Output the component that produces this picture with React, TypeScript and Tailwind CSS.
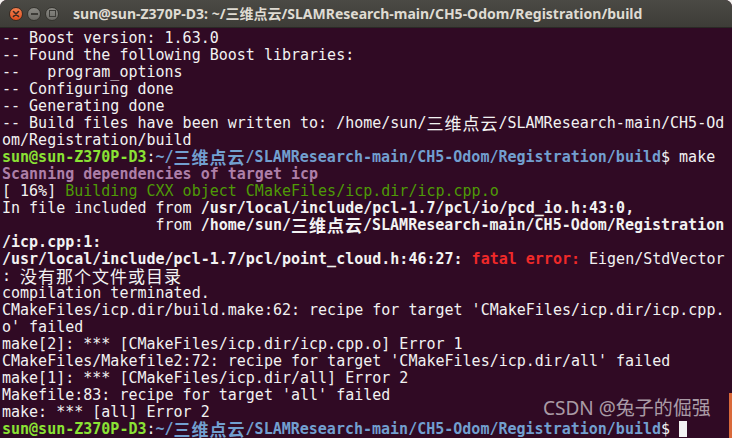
import React from "react";

const MONO = "font-['DejaVu_Sans_Mono','Liberation_Mono','Noto_Sans_CJK_SC',monospace]";

// CJK glyphs take two terminal columns (18px)
const Cjk = ({ children }: { children: string }) => (
  <span className="relative -top-[1px] inline-block h-[17px] align-top leading-[17px] font-['Noto_Sans_CJK_SC',sans-serif] text-[17px] tracking-[1px]">
    {children}
  </span>
);

const Prompt = ({ cmd }: { cmd?: string }) => (
  <>
    <span className="font-bold text-[#8ae234]">sun@sun-Z370P-D3</span>
    <span>:</span>
    <span className="font-bold text-[#729fcf]">
      ~/<Cjk>三维点云</Cjk>/SLAMResearch-main/CH5-Odom/Registration/build
    </span>
    <span>$ {cmd}</span>
  </>
);

const B = ({ children }: { children: React.ReactNode }) => <span className="font-bold">{children}</span>;

export default function App() {
  const lines: React.ReactNode[] = [
    "-- Boost version: 1.63.0",
    "-- Found the following Boost libraries:",
    "--   program_options",
    "-- Configuring done",
    "-- Generating done",
    <>-- Build files have been written to: /home/sun/<Cjk>三维点云</Cjk>/SLAMResearch-main/CH5-Od</>,
    "om/Registration/build",
    <Prompt cmd="make" />,
    <span className="font-bold text-[#ad7fa8]">Scanning dependencies of target icp</span>,
    <>[ 16%] <span className="text-[#4e9a06]">Building CXX object CMakeFiles/icp.dir/icp.cpp.o</span></>,
    <>In file included from <B>/usr/local/include/pcl-1.7/pcl/io/pcd_io.h:43:0,</B></>,
    <>{"                 from "}<B>/home/sun/<Cjk>三维点云</Cjk>/SLAMResearch-main/CH5-Odom/Registration</B></>,
    <B>/icp.cpp:1:</B>,
    <>
      <B>/usr/local/include/pcl-1.7/pcl/point_cloud.h:46:27:</B>{" "}
      <span className="font-bold text-[#ef2929]">fatal error:</span> Eigen/StdVector
    </>,
    <>: <Cjk>没有那个文件或目录</Cjk></>,
    "compilation terminated.",
    "CMakeFiles/icp.dir/build.make:62: recipe for target 'CMakeFiles/icp.dir/icp.cpp.",
    "o' failed",
    "make[2]: *** [CMakeFiles/icp.dir/icp.cpp.o] Error 1",
    "CMakeFiles/Makefile2:72: recipe for target 'CMakeFiles/icp.dir/all' failed",
    "make[1]: *** [CMakeFiles/icp.dir/all] Error 2",
    "Makefile:83: recipe for target 'all' failed",
    "make: *** [all] Error 2",
    <>
      <Prompt />
      <span className="inline-block w-[8px] h-[16px] align-[-3px] bg-[#f2f2f2]" />
    </>,
  ];

  return (
    <div className="w-[732px] h-[438px] bg-[#f4f2ef] overflow-hidden">
      <div className="h-full rounded-t-[7px] overflow-hidden flex flex-col bg-[#300a24]">
        {/* Title bar */}
        <div className="h-[28px] shrink-0 flex items-center bg-gradient-to-b from-[#4b4a45] to-[#3d3c37] border-b border-[#2a2925]">
          <div className="flex items-center gap-[4px] pl-[9px]">
            <div className="w-[14px] h-[14px] rounded-full bg-gradient-to-b from-[#f3804f] to-[#df4d1a] border border-[#3a2a22] flex items-center justify-center">
              <svg width="8" height="8" viewBox="0 0 8 8">
                <path d="M1.5 1.5 L6.5 6.5 M6.5 1.5 L1.5 6.5" stroke="#3c2a22" strokeWidth="1.6" strokeLinecap="round" />
              </svg>
            </div>
            <div className="w-[14px] h-[14px] rounded-full bg-gradient-to-b from-[#8a8984] to-[#6c6b66] border border-[#35342f] flex items-center justify-center">
              <div className="w-[7px] h-[2px] bg-[#3c3b37]" />
            </div>
            <div className="w-[14px] h-[14px] rounded-full bg-gradient-to-b from-[#8a8984] to-[#6c6b66] border border-[#35342f] flex items-center justify-center">
              <div className="w-[7px] h-[7px] border-[1.5px] border-[#3c3b37]" />
            </div>
          </div>
          <div className="pl-[14px] text-[14px] font-bold text-[#dfdbd2] whitespace-nowrap font-['Noto_Sans','Noto_Sans_CJK_SC',sans-serif]">
            sun@sun-Z370P-D3: ~/三维点云/SLAMResearch-main/CH5-Odom/Registration/build
          </div>
        </div>

        {/* Terminal body */}
        <div className={`relative flex-1 pl-[2px] pt-[2px] text-[15px] leading-[17px] text-[#f2f2f2] ${MONO}`}>
          {lines.map((l, i) => (
            <div key={i} className="h-[17px] whitespace-pre">
              {l}
            </div>
          ))}
          <div className="absolute left-[543px] top-[369px] text-[19px] leading-[22px] text-[#ffffff]/60 whitespace-nowrap font-['Noto_Sans','Noto_Sans_CJK_SC',sans-serif]">
            CSDN @兔子的倔强
          </div>
          <div className="absolute right-0 top-[365px] w-[3px] h-[45px] bg-[#d9693a]" />
        </div>
      </div>
    </div>
  );
}
